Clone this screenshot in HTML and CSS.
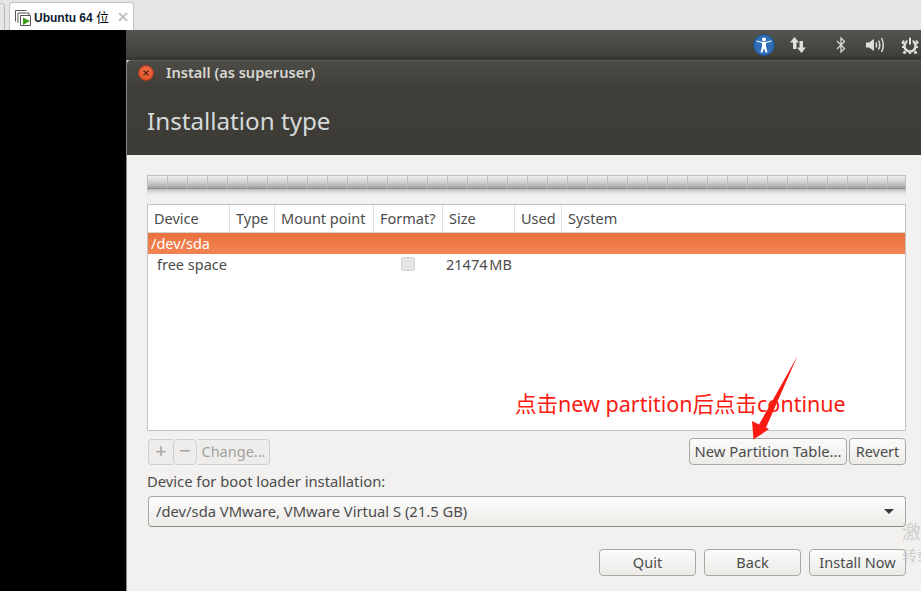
FILE: index.html
```html
<!DOCTYPE html>
<html lang="en">
<head>
<meta charset="utf-8">
<title>Install (as superuser)</title>
<link rel="stylesheet" href="styles.css">
</head>
<body>
<div class="tabbar">
  <div class="tab-stub"></div>
  <div class="tab">
    <svg class="vm-icon" width="16" height="16" viewBox="0 0 16 16"><path d="M.5 11.500V.5H11.500M3 13V3H14V5" fill="none" stroke="#555" stroke-width="1"/><path d="M5.500 15.500V5.500H15.500V15.500Z" fill="#fff" stroke="#555"/><path d="M8 7.500L15 11 8 15Z" fill="#3c9a1c"/></svg>
    <span class="tab-label">Ubuntu 64 <span class="tab-cjk">位</span></span>
    <svg class="tab-close" width="10" height="10" viewBox="0 0 10 10"><path d="M1 1L9 9M9 1L1 9" stroke="#c4c4c4" stroke-width="2.200"/></svg>
  </div>
</div>
<div class="desktop">
  <div class="blackout"></div>
  <div class="screen">
    <div class="panel">
      <svg class="ind ind-a11y" width="22" height="22" viewBox="0 0 22 22"><circle cx="11" cy="11" r="10.500" fill="#2f6fb5"/><circle cx="11" cy="11" r="10.500" fill="none" stroke="#1f4f8a"/><circle cx="11" cy="5.500" r="2" fill="#fff"/><path d="M3.500 7.500L9 9V12.500L7.500 18.500H9.500L11 14 12.500 18.500H14.500L13 12.500V9L18.500 7.500V6.500L12.500 8H9.500L3.500 6.500Z" fill="#fff"/></svg>
      <svg class="ind ind-net" width="18" height="18" viewBox="0 0 18 18"><path d="M5.500 1L10 6.500H7.500V13H4V6.500H1Z" fill="#e2e0da"/><path d="M10.500 5H14V11.500H17L12.500 17 8 11.500H10.500Z" fill="#dfddd7"/></svg>
      <svg class="ind ind-bt" width="10" height="18" viewBox="0 0 10 18"><path d="M1 5L8.500 12.500 5 16V2L8.500 5.500 1 13" fill="none" stroke="#d8d6d0" stroke-width="1.300"/></svg>
      <svg class="ind ind-vol" width="21" height="18" viewBox="0 0 21 18"><path d="M1 6.500H4L9 3V15L4 11.500H1Z" fill="#dfddd7"/><path d="M11 6.500Q12.500 9 11 11.500M13.500 4.500Q16 9 13.500 13.500M16.500 2Q20 9 16.500 16" fill="none" stroke="#dfddd7" stroke-width="1.500"/></svg>
      <svg class="ind ind-gear" width="18" height="18" viewBox="0 0 18 18"><circle cx="9" cy="10" r="5.500" fill="none" stroke="#dfddd7" stroke-width="2.400"/><path d="M9 1V8" stroke="#3f3e39" stroke-width="5"/><path d="M9 1.500V8.500" stroke="#e6e4de" stroke-width="2"/><path d="M3 4.500L1.500 6.500 3 8M15 4.500L16.500 6.500 15 8M1 11H3M15 11H17M4 15L3 16.500 5 17M14 15L15 16.500 13 17M8 17H10" fill="none" stroke="#dfddd7" stroke-width="2"/></svg>
    </div>
    <div class="window">
      <header class="win-head">
        <div class="titlebar">
          <span class="close-btn"><svg width="8" height="8" viewBox="0 0 8 8"><path d="M1.500 1.500L6.500 6.500M6.500 1.500L1.500 6.500" stroke="#5a2010" stroke-width="1.200"/></svg></span>
          <span class="win-title">Install (as superuser)</span>
        </div>
        <h1 class="heading">Installation type</h1>
      </header>
      <main class="content">
        <div class="partbar"></div>
        <div class="partbar-reflect"></div>
        <div class="table">
          <div class="thead">
            <div class="th">Device</div>
            <div class="th">Type</div>
            <div class="th">Mount point</div>
            <div class="th">Format?</div>
            <div class="th">Size</div>
            <div class="th">Used</div>
            <div class="th th-last">System</div>
          </div>
          <div class="row-selected">/dev/sda</div>
          <div class="row">
            <div class="td-device">free space</div>
            <div class="td-empty"></div>
            <div class="td-empty"></div>
            <div class="td-check"><span class="checkbox"></span></div>
            <div class="td-size">21474 MB</div>
          </div>
        </div>
        <div class="toolbar">
          <div class="tool-left">
            <button class="btn btn-dis btn-plus">+</button>
            <button class="btn btn-dis btn-minus">−</button>
            <button class="btn btn-dis btn-change">Change...</button>
          </div>
          <div class="tool-right">
            <button class="btn btn-new">New Partition Table...</button>
            <button class="btn btn-revert">Revert</button>
          </div>
        </div>
        <div class="boot-label">Device for boot loader installation:</div>
        <div class="combo">
          <span>/dev/sda VMware, VMware Virtual S (21.5 GB)</span>
          <span class="combo-arrow"></span>
        </div>
        <div class="actions">
          <button class="btn btn-act">Quit</button>
          <button class="btn btn-act">Back</button>
          <button class="btn btn-act">Install Now</button>
        </div>
      </main>
    </div>
  </div>
</div>
<div class="note">点击new partition后点击continue</div>
<svg class="arrow" width="60" height="90" viewBox="0 0 60 90"><path d="M56.500 1L25 72.500 28 74 12.500 84.500 11 66 18 69.500Z" fill="#fb1a12"/></svg>
<div class="mark mark-a">激</div>
<div class="mark mark-b">转载</div>
</body>
</html>
```
FILE: styles.css
```css
* { box-sizing: border-box; }
html, body { margin: 0; padding: 0; }
body {
  position: relative;
  width: 921px;
  height: 591px;
  overflow: hidden;
  font-family: "Noto Sans", sans-serif;
  font-size: 15px;
  color: #4c4c4c;
  background: #000;
}
.tabbar {
  height: 30px;
  background: #e4e5e7;
  display: flex;
  align-items: flex-end;
  gap: 4px;
}
.tab-stub {
  width: 5px;
  height: 27px;
  border-right: 1px solid #b8b9bb;
  border-top: 1px solid #c4c5c7;
  border-top-right-radius: 3px;
}
.tab {
  width: 125px;
  height: 28px;
  background: #fff;
  border: 1px solid #c2c3c5;
  border-bottom: 0;
  border-radius: 4px 4px 0 0;
  display: flex;
  align-items: center;
  padding: 0 0 0 5px;
}
.vm-icon { margin: 2px 0 0 0; flex: none; }
.tab-label {
  margin-left: 3px;
  font-family: "Liberation Sans", sans-serif;
  font-weight: 700;
  font-size: 12px;
  color: #0c1c34;
  white-space: nowrap;
  width: 84px;
}
.tab-cjk { font-family: "Noto Sans CJK SC", sans-serif; color: #000; font-weight: 400; font-size: 13px; }
.tab-close { flex: none; }
.desktop { display: flex; height: 561px; }
.blackout { width: 126px; background: #000; flex: none; }
.screen { flex: 1; display: flex; flex-direction: column; min-width: 0; }
.panel {
  height: 30px;
  flex: none;
  background: linear-gradient(#55544f, #3f3e39 90%, #33322e 93%, #3a3934);
  display: flex;
  align-items: center;
  justify-content: flex-end;
  position: relative;
}
.ind { flex: none; }
.ind-a11y { margin-right: 14px; }
.ind-net { margin-right: 29px; }
.ind-bt { margin-right: 19px; }
.ind-vol { margin-right: 15px; }
.ind-gear { margin-right: 2px; }
.window { flex: 1; display: flex; flex-direction: column; background: #f2f1ef; border-left: 1px solid #8a8986; min-height: 0; }
.win-head {
  height: 95px;
  flex: none;
  background: linear-gradient(#4c4b46, #3e3d38 30%, #3d3c37);
  border-radius: 4px 0 0 0;
  border-top: 1px solid #5c5b56;
  padding-left: 11px;
}
.titlebar { display: flex; align-items: center; height: 24px; margin-top: 0; }
.close-btn {
  width: 16px;
  height: 16px;
  border-radius: 50%;
  background: radial-gradient(circle at 50% 40%, #f4714a, #d9481f);
  border: 1px solid #a93a1c;
  display: flex;
  align-items: center;
  justify-content: center;
  flex: none;
}
.win-title {
  margin-left: 12px;
  padding-bottom: 2px;
  font-size: 14.600px;
  font-weight: 600;
  color: #d8d6d0;
  white-space: nowrap;
}
.heading {
  margin: 19px 0 0 9px;
  font-size: 24.200px;
  line-height: 34px;
  font-weight: 400;
  color: #d6dadb;
}
.content { flex: 1; padding: 20px 15px 0 20px; min-height: 0; }
.partbar {
  height: 14px;
  border: 1px solid #c0bfbc;
  border-bottom-color: #8e8e8c;
  background:
    repeating-linear-gradient(90deg, transparent 0 19px, #bdbdbb 19px 20px),
    linear-gradient(#f0f0ee, #dcdcda 35%, #c0c0be 70%, #a0a09e);
}
.partbar-reflect {
  height: 8px;
  margin-bottom: 7px;
  background:
    linear-gradient(rgba(242,241,239,0), #f2f1ef),
    repeating-linear-gradient(90deg, transparent 0 19px, #d0d0ce 19px 20px),
    linear-gradient(#b8b8b6, #f2f1ef);
}
.table {
  height: 227px;
  background: #fff;
  border: 1px solid #c3c2bf;
}
.thead {
  height: 28px;
  display: grid;
  grid-template-columns: 82px 45px 99px 69px 72px 47px 1fr;
  border-bottom: 1px solid #d5d4d1;
}
.th {
  border-right: 1px solid #e0dfdc;
  padding-left: 6px;
  line-height: 27px;
  white-space: nowrap;
  font-size: 14.500px;
}
.th-last { border-right: 0; }
.row-selected {
  height: 21px;
  line-height: 21px;
  padding-left: 3px;
  color: #fff;
  font-size: 14.500px;
  background: linear-gradient(#ea713e, #f48454);
}
.row {
  height: 20px;
  display: grid;
  grid-template-columns: 82px 45px 99px 69px 72px;
  align-items: center;
  font-size: 14.500px;
}
.td-device { padding-left: 9px; white-space: nowrap; }
.td-check { display: flex; justify-content: center; padding-right: 2px; }
.checkbox {
  width: 14px;
  height: 14px;
  border: 1px solid #cfcecb;
  border-radius: 3px;
  background: #e6e5e3;
}
.td-size { padding-left: 3px; white-space: nowrap; word-spacing: -2px; }
.toolbar {
  display: flex;
  justify-content: space-between;
  margin-top: 7px;
  height: 27px;
}
.tool-left { display: flex; padding: 1px 0 0 1px; }
.tool-right { display: flex; gap: 2px; }
.btn {
  font: inherit;
  font-size: 14.500px;
  color: #4c4c4c;
  border: 1px solid #a8a7a4;
  border-radius: 4px;
  background: linear-gradient(#fbfbfa, #ecebe8);
  padding: 0 0 2px;
  white-space: nowrap;
}
.btn-dis {
  color: #a2a19e;
  background: #eeedeb;
  border-color: #d0cfcc;
  height: 26px;
}
.btn-plus { width: 25px; font-size: 20px; line-height: 18px; border-radius: 4px 0 0 4px; border-right: 0; }
.btn-minus { width: 24px; font-size: 20px; line-height: 18px; }
.btn-change { width: 72px; margin-left: 1px; border-left: 0; border-radius: 0 4px 4px 0; }
.btn-new { width: 158px; height: 27px; font-size: 14.800px; }
.btn-revert { width: 57px; height: 27px; }
.boot-label { margin-top: 6px; line-height: 20px; font-size: 14.750px; white-space: nowrap; }
.combo {
  margin: 5px 0 0 1px;
  height: 31px;
  border: 1px solid #a8a7a4;
  border-bottom-color: #8e8d8a;
  border-radius: 4px;
  background: linear-gradient(#fdfdfc, #ecebe8);
  display: flex;
  align-items: center;
  justify-content: space-between;
  padding: 0 11px 2px 7px;
  font-size: 14.750px;
}
.combo-arrow {
  width: 0;
  height: 0;
  border-left: 5px solid transparent;
  border-right: 5px solid transparent;
  border-top: 5px solid #3c3c3c;
  margin-top: 2px;
}
.actions { display: flex; justify-content: flex-end; gap: 8px; margin-top: 22px; }
.btn-act { width: 97px; height: 27px; }
.note {
  position: absolute;
  left: 515px;
  top: 390px;
  font-family: "Noto Sans", "Noto Sans CJK SC", sans-serif;
  font-size: 21.500px;
  line-height: 28px;
  color: #fb1a12;
  white-space: nowrap;
}
.arrow { position: absolute; left: 741px; top: 355px; }
.mark {
  position: absolute;
  left: 902px;
  font-family: "Noto Sans CJK SC", sans-serif;
  color: #d0cfcd;
  white-space: nowrap;
}
.mark-a { top: 518px; font-size: 19px; line-height: 26px; }
.mark-b { top: 545px; font-size: 15px; line-height: 20px; }
```
